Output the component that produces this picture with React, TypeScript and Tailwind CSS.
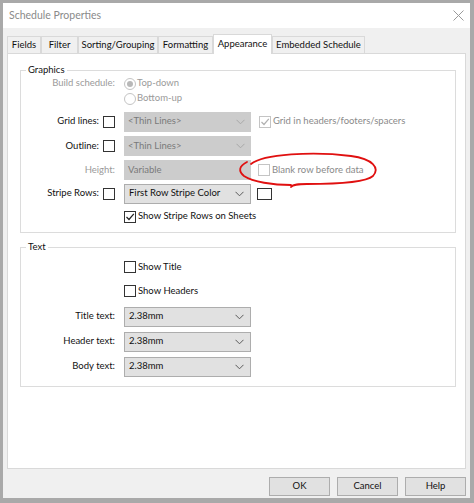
import React from "react";

const font = { fontFamily: 'Lato, "Noto Sans", sans-serif' };

function Chevron({ muted }: { muted?: boolean }) {
  return (
    <svg width="9" height="6" viewBox="0 0 9 6" className="shrink-0">
      <path d="M0.5 0.8 L4.5 4.8 L8.5 0.8" fill="none" stroke={muted ? "#a8a8a8" : "#5a5a5a"} strokeWidth="1" />
    </svg>
  );
}

function Check({ checked, disabled }: { checked?: boolean; disabled?: boolean }) {
  return (
    <span
      className={`flex h-[12px] w-[12px] shrink-0 items-center justify-center border bg-white ${
        disabled ? "border-[#c4c4c4]" : "border-[#333333]"
      }`}
    >
      {checked && (
        <svg width="10" height="10" viewBox="0 0 10 10">
          <path d="M1.5 5 L4 7.5 L8.8 1.8" fill="none" stroke={disabled ? "#b0b0b0" : "#222"} strokeWidth="1.2" />
        </svg>
      )}
    </span>
  );
}

function Radio({ on }: { on?: boolean }) {
  return (
    <span className="flex h-[12px] w-[12px] shrink-0 items-center justify-center rounded-full border border-[#c4c4c4] bg-white">
      {on && <span className="h-[6px] w-[6px] rounded-full bg-[#b8b8b8]" />}
    </span>
  );
}

function Select({ value, disabled, arrow = true }: { value: string; disabled?: boolean; arrow?: boolean }) {
  return (
    <div
      className={`flex h-[20px] w-[127px] items-center justify-between pl-[4px] pr-[6px] ${
        disabled ? "bg-[#cccccc] text-[#7a7a7a]" : "border border-[#adadad] bg-[#e1e1e1] text-[#111]"
      }`}
    >
      <span>{value}</span>
      {arrow && <Chevron muted={disabled} />}
    </div>
  );
}

function Row({
  label,
  muted,
  box,
  children,
  h = "h-[24px]",
}: {
  label?: string;
  muted?: boolean;
  box?: boolean;
  children?: React.ReactNode;
  h?: string;
}) {
  return (
    <div className={`flex items-center ${h}`}>
      <div className="flex w-[94px] items-center justify-end gap-[4px]">
        {label && <span className={muted ? "text-[#9a9a9a]" : "text-[#111]"}>{label}</span>}
        {box && <Check />}
      </div>
      <div className="ml-[9px] flex items-center gap-[6px]">{children}</div>
    </div>
  );
}

function Tab({ label, active, w }: { label: string; active?: boolean; w: string }) {
  return (
    <div
      className={`flex items-center justify-center whitespace-nowrap border border-b-0 ${w} ${
        active
          ? "relative z-10 -mb-px h-[20px] border-[#d9d9d9] bg-white"
          : "h-[17px] border-[#d9d9d9] bg-[#f0f0f0]"
      }`}
    >
      {label}
    </div>
  );
}

export default function App() {
  return (
    <div className="h-[503px] w-[474px] bg-[#a9a9a9] pb-[5px] pl-[3px] pr-[4px] pt-[3px] text-[9.5px] text-[#111]" style={font}>
      <div className="relative flex h-full flex-col bg-[#f0f0f0]">
        {/* title bar */}
        <div className="flex h-[25px] items-center justify-between bg-white pl-[6px] pr-[6px]">
          <span className="text-[10.5px] text-[#8a8a8a]">Schedule Properties</span>
          <svg width="11" height="11" viewBox="0 0 11 11">
            <path d="M0.5 0.5 L10.5 10.5 M10.5 0.5 L0.5 10.5" stroke="#9a9a9a" strokeWidth="1" />
          </svg>
        </div>

        {/* tabs */}
        <div className="mt-[6px] flex items-end pl-[4px]">
          <Tab label="Fields" w="w-[34px]" />
          <Tab label="Filter" w="w-[37px]" />
          <Tab label="Sorting/Grouping" w="w-[80px]" />
          <Tab label="Formatting" w="w-[55px]" />
          <Tab label="Appearance" w="w-[59px]" active />
          <Tab label="Embedded Schedule" w="w-[93px]" />
        </div>

        {/* tab panel */}
        <div className="mx-[4px] h-[416px] border border-[#d9d9d9] bg-white pl-[12px] pr-[9px] pt-[10px]">
          <fieldset className="border border-[#dcdcdc] pb-[4px] pl-0 pr-0 pt-0">
            <legend className="ml-[5px] px-[2px] leading-[12px]">Graphics</legend>
            <Row label="Build schedule:" muted h="h-[15px]">
              <Radio on />
              <span className="-ml-[5px] text-[#9a9a9a]">Top-down</span>
            </Row>
            <Row h="h-[15px]">
              <Radio />
              <span className="-ml-[5px] text-[#9a9a9a]">Bottom-up</span>
            </Row>
            <div className="h-[3px]" />
            <Row label="Grid lines:" box h="h-[25px]">
              <Select value="<Thin Lines>" disabled />
              <span className="ml-[2px] flex items-center gap-[2px]">
                <Check checked disabled />
                <span className="text-[#8a8a8a]">Grid in headers/footers/spacers</span>
              </span>
            </Row>
            <Row label="Outline:" box h="h-[24px]">
              <Select value="<Thin Lines>" disabled />
            </Row>
            <Row label="Height:" muted h="h-[24px]">
              <Select value="Variable" disabled arrow={false} />
              <span className="ml-[1px] flex items-center gap-[2px]">
                <Check disabled />
                <span className="text-[#8a8a8a]">Blank row before data</span>
              </span>
            </Row>
            <Row label="Stripe Rows:" box h="h-[23px]">
              <Select value="First Row Stripe Color" />
              <span className="h-[12px] w-[15px] border border-[#333] bg-white" />
            </Row>
            <Row h="h-[23px]">
              <span className="flex items-center gap-[2px]">
                <Check checked />
                <span>Show Stripe Rows on Sheets</span>
              </span>
            </Row>
          </fieldset>

          <fieldset className="mt-[8px] border border-[#dcdcdc] pb-[7px] pl-0 pr-0 pt-[2px]">
            <legend className="ml-[5px] px-[2px] leading-[12px]">Text</legend>
            <Row h="h-[24px]">
              <span className="flex items-center gap-[2px]">
                <Check />
                <span>Show Title</span>
              </span>
            </Row>
            <Row h="h-[24px]">
              <span className="flex items-center gap-[2px]">
                <Check />
                <span>Show Headers</span>
              </span>
            </Row>
            <div className="h-[1px]" />
            <Row label="Title text:" h="h-[25px]">
              <Select value="2.38mm" />
            </Row>
            <Row label="Header text:" h="h-[25px]">
              <Select value="2.38mm" />
            </Row>
            <Row label="Body text:" h="h-[25px]">
              <Select value="2.38mm" />
            </Row>
          </fieldset>
        </div>

        {/* buttons */}
        <div className="mt-[8px] flex justify-end gap-[7px] pr-[4px]">
          {["OK", "Cancel", "Help"].map((b) => (
            <div key={b} className="flex h-[19px] w-[61px] items-center justify-center border border-[#adadad] bg-[#e1e1e1]">
              {b}
            </div>
          ))}
        </div>

        {/* red annotation */}
        <svg className="pointer-events-none absolute left-[230px] top-[146px]" width="150" height="42" viewBox="0 0 150 42">
          <path
            d="M18 15 C30 5 80 2 118 7 C140 10 147 19 140 27 C132 34 100 35 74 35 C66 35 60 35 58 38 M58 36 C40 36 20 33 11 27 C5 22 6 17 14 13"
            fill="none"
            stroke="#e01010"
            strokeWidth="1.8"
            strokeLinecap="round"
          />
        </svg>
      </div>
    </div>
  );
}
